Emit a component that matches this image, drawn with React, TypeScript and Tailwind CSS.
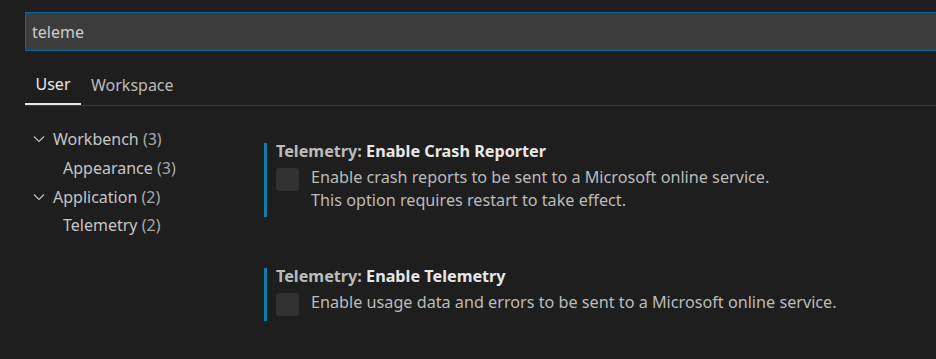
import React from "react";

interface TreeItem {
  label: string;
  count: number;
  depth: number;
}

interface Setting {
  category: string;
  name: string;
  lines: string[];
}

const tree: TreeItem[] = [
  { label: "Workbench", count: 3, depth: 0 },
  { label: "Appearance", count: 3, depth: 1 },
  { label: "Application", count: 2, depth: 0 },
  { label: "Telemetry", count: 2, depth: 1 },
];

const settings: Setting[] = [
  {
    category: "Telemetry",
    name: "Enable Crash Reporter",
    lines: [
      "Enable crash reports to be sent to a Microsoft online service.",
      "This option requires restart to take effect.",
    ],
  },
  {
    category: "Telemetry",
    name: "Enable Telemetry",
    lines: ["Enable usage data and errors to be sent to a Microsoft online service."],
  },
];

function Chevron() {
  return (
    <svg width="12" height="12" viewBox="0 0 12 12" fill="none">
      <path d="M1 3.5 L6 8.5 L11 3.5" stroke="#c5c5c5" strokeWidth="1.1" />
    </svg>
  );
}

export default function App() {
  return (
    <div
      className="h-screen w-full overflow-hidden bg-[#1e1e1e] text-[#cccccc]"
      style={{ fontFamily: '"Noto Sans", "Open Sans", sans-serif' }}
    >
      {/* search */}
      <div className="pt-[12px] pl-[25px]">
        <div className="w-[940px] h-[39px] bg-[#3c3c3c] border border-[#0e639c] flex items-center pl-[6px] text-[16px] text-[#cccccc]">
          teleme
        </div>
      </div>

      {/* tabs */}
      <div className="ml-[25px] mt-[14px] flex border-b border-[#3a3a3a]">
        <div className="w-[56px] h-[40px] flex items-center justify-center text-[16px] text-[#e7e7e7] border-b-2 border-[#e7e7e7] -mb-px">
          User
        </div>
        <div className="h-[40px] flex items-center pl-[10px] text-[16px] text-[#bbbbbb]">
          Workspace
        </div>
      </div>

      <div className="flex">
        {/* tree */}
        <div className="w-[264px] pt-[19px] pl-[33px]">
          {tree.map((t) => (
            <div
              key={t.label}
              className="h-[28.7px] flex items-center text-[16px] text-[#c5c5c5]"
            >
              {t.depth === 0 ? (
                <span className="w-[20px] flex items-center">
                  <Chevron />
                </span>
              ) : (
                <span className="w-[30px]" />
              )}
              <span>
                {t.label} <span className="text-[#a8a8a8]">({t.count})</span>
              </span>
            </div>
          ))}
        </div>

        {/* settings */}
        <div className="pt-[37px] flex flex-col gap-[51px]">
          {settings.map((s) => (
            <div
              key={s.name}
              className="border-l-[3px] border-[#0e7fa8] pl-[9px] pb-[5px]"
            >
              <div className="text-[16.2px] leading-[16px] font-bold">
                <span className="text-[#bbbbbb]">{s.category}: </span>
                <span className="text-[#e7e7e7]">{s.name}</span>
              </div>
              <div className="mt-[7px] flex items-start gap-[12px]">
                <div className="mt-[2px] w-[23px] h-[23px] rounded-[3px] bg-[#313131] shrink-0" />
                <div className="text-[16.2px] leading-[23px] text-[#bbbbbb]">
                  {s.lines.map((l) => (
                    <div key={l}>{l}</div>
                  ))}
                </div>
              </div>
            </div>
          ))}
        </div>
      </div>
    </div>
  );
}
